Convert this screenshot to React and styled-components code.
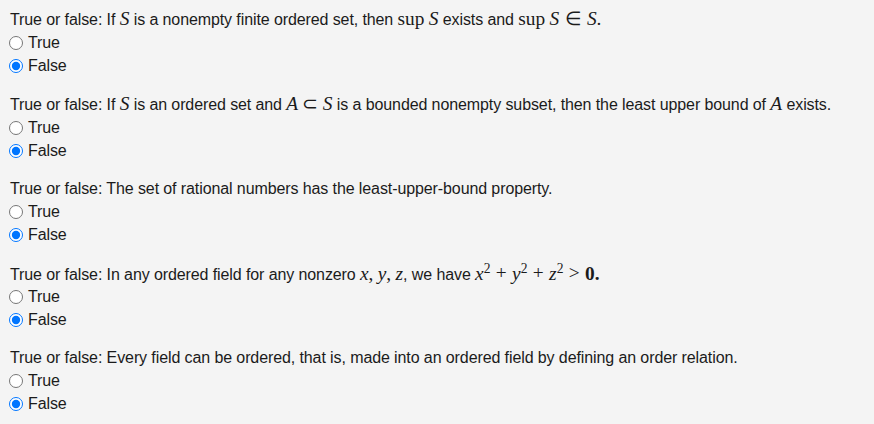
import React from "react";
import styled, { createGlobalStyle } from "styled-components";

const Global = createGlobalStyle`
  html, body { margin: 0; padding: 0; background: #f4f4f4; }
  body { font-family: "Liberation Sans", Arial, sans-serif; font-size: 16px; color: #1b1b1b; letter-spacing: -0.1px; }
`;

const Page = styled.div`
  padding: 8px 10px 0 10px;
  display: flex;
  flex-direction: column;
  gap: 15.5px;
`;

const Question = styled.div`
  display: flex;
  flex-direction: column;
`;

const Prompt = styled.div`
  line-height: 23px;
  height: 23px;
  white-space: nowrap;
`;

const Option = styled.label`
  display: flex;
  align-items: center;
  height: 23px;
  line-height: 23px;
`;

const Radio = styled.input`
  margin: 1px 5px 0 -1px;
  width: 14px;
  height: 14px;
`;

const M = styled.span`
  font-family: "Liberation Serif", "Times New Roman", serif;
  font-style: ${(p) => (p.$up ? "normal" : "italic")};
  font-weight: ${(p) => (p.$bold ? "bold" : "normal")};
  font-size: 1.21em;
  line-height: 1;
  letter-spacing: 0;
  margin: 0 ${(p) => p.$gap || 0};
`;

const Sup = styled.sup`
  font-size: 0.7em;
  vertical-align: 0.6em;
  line-height: 0;
`;

const questions = [
  <>
    True or false: If <M>S</M> is a nonempty finite ordered set, then <M $up>sup</M>{" "}
    <M>S</M> exists and <M $up>sup</M> <M>S</M> <M $up $gap="1px">∈</M> <M>S</M>
    <M $up>.</M>
  </>,
  <>
    True or false: If <M>S</M> is an ordered set and <M>A</M> <M $up>⊂</M> <M>S</M> is a
    bounded nonempty subset, then the least upper bound of <M>A</M> exists.
  </>,
  <>True or false: The set of rational numbers has the least-upper-bound property.</>,
  <>
    True or false: In any ordered field for any nonzero <M>x</M>
    <M $up>,</M> <M>y</M>
    <M $up>,</M> <M>z</M>, we have <M>x</M>
    <Sup>
      <M $up>2</M>
    </Sup>{" "}
    <M $up $gap="1px">+</M> <M>y</M>
    <Sup>
      <M $up>2</M>
    </Sup>{" "}
    <M $up $gap="1px">+</M> <M>z</M>
    <Sup>
      <M $up>2</M>
    </Sup>{" "}
    <M $up $gap="1px">&gt;</M> <M $up $bold>0.</M>
  </>,
  <>
    True or false: Every field can be ordered, that is, made into an ordered field by defining an
    order relation.
  </>,
];

export default function App() {
  return (
    <>
      <Global />
      <Page>
        {questions.map((q, i) => (
          <Question key={i}>
            <Prompt>{q}</Prompt>
            <Option>
              <Radio type="radio" name={`q${i}`} value="true" />
              True
            </Option>
            <Option>
              <Radio type="radio" name={`q${i}`} value="false" defaultChecked />
              False
            </Option>
          </Question>
        ))}
      </Page>
    </>
  );
}
